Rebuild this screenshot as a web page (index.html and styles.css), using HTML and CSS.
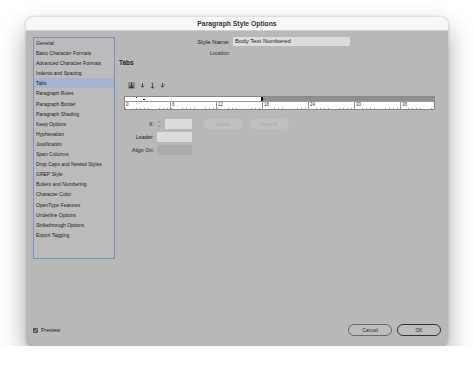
FILE: index.html
```html
<!DOCTYPE html>
<html lang="en">

<head>
    <meta charset="UTF-8" />
    <title>Paragraph Style Options</title>
    <link rel="stylesheet" href="styles.css">
</head>

<body>
    <div class="fenetre">
        <div class="titre">Paragraph Style Options</div>
        <div class="contenu">
            <div class="principal">
                <ul class="liste">
                    <li>General</li>
                    <li>Basic Character Formats</li>
                    <li>Advanced Character Formats</li>
                    <li>Indents and Spacing</li>
                    <li class="actif">Tabs</li>
                    <li>Paragraph Rules</li>
                    <li>Paragraph Border</li>
                    <li>Paragraph Shading</li>
                    <li>Keep Options</li>
                    <li>Hyphenation</li>
                    <li>Justification</li>
                    <li>Span Columns</li>
                    <li>Drop Caps and Nested Styles</li>
                    <li>GREP Style</li>
                    <li>Bullets and Numbering</li>
                    <li>Character Color</li>
                    <li>OpenType Features</li>
                    <li>Underline Options</li>
                    <li>Strikethrough Options</li>
                    <li>Export Tagging</li>
                </ul>

                <div class="panneau">
                    <div class="ligne-nom">
                        <label class="etiquette-nom">Style Name:</label>
                        <div class="champ champ-nom">Body Text Numbered</div>
                    </div>
                    <div class="ligne-lieu">
                        <label class="etiquette-nom">Location:</label>
                    </div>
                    <h3 class="section">Tabs</h3>

                    <div class="outils-tabs">
                        <span class="outil choisi">
                            <svg width="5" height="5" viewBox="0 0 5 5"><path d="M2.5 0V4M0.8 2.6L2.5 4.3L4.2 2.6M0 4.6H5" stroke="#222" stroke-width="0.8" fill="none"/></svg>
                        </span>
                        <span class="outil">
                            <svg width="5" height="5" viewBox="0 0 5 5"><path d="M2.5 0V4M0.8 2.6L2.5 4.3L4.2 2.6" stroke="#333" stroke-width="0.8" fill="none"/></svg>
                        </span>
                        <span class="outil">
                            <svg width="5" height="6" viewBox="0 0 5 6"><path d="M1.5 0.4H3.5M2.5 1.2V5M0.8 3.6L2.5 5.3L4.2 3.6" stroke="#333" stroke-width="0.8" fill="none"/></svg>
                        </span>
                        <span class="outil">
                            <svg width="5" height="5" viewBox="0 0 5 5"><path d="M2.5 0V4M0.8 2.6L2.5 4.3L4.2 2.6" stroke="#333" stroke-width="0.8" fill="none"/><circle cx="4.3" cy="1.6" r="0.5" fill="#333"/></svg>
                        </span>
                    </div>

                    <div class="regle">
                        <div class="bande">
                            <span class="retrait"></span>
                            <span class="retrait bas"></span>
                            <span class="marge"></span>
                        </div>
                        <div class="graduations">
                            <span>0</span>
                            <span>6</span>
                            <span>12</span>
                            <span>18</span>
                            <span>24</span>
                            <span>30</span>
                            <span>36</span>
                        </div>
                    </div>

                    <div class="reglages">
                        <div class="ligne-reglage">
                            <label class="etiquette">X:</label>
                            <span class="fleches">
                                <svg width="4" height="8" viewBox="0 0 4 8"><path d="M0.6 2.8L2 1.2L3.4 2.8M0.6 5.2L2 6.8L3.4 5.2" stroke="#777" stroke-width="0.6" fill="none"/></svg>
                            </span>
                            <div class="champ champ-x"></div>
                            <button class="bouton-inactif">Delete</button>
                            <button class="bouton-inactif">Clear All</button>
                        </div>
                        <div class="ligne-reglage">
                            <label class="etiquette">Leader:</label>
                            <div class="champ champ-court"></div>
                        </div>
                        <div class="ligne-reglage">
                            <label class="etiquette">Align On:</label>
                            <div class="champ champ-court inactif"></div>
                        </div>
                    </div>
                </div>
            </div>

            <div class="pied">
                <label class="apercu">
                    <span class="case">
                        <svg width="5" height="5" viewBox="0 0 5 5"><path d="M1 2.6L2.1 3.7L4 1.2" stroke="#ddd" stroke-width="0.8" fill="none"/></svg>
                    </span>
                    Preview
                </label>
                <div class="boutons">
                    <button class="bouton">Cancel</button>
                    <button class="bouton principal-btn">OK</button>
                </div>
            </div>
        </div>
    </div>
</body>

</html>
```

FILE: styles.css
```css
body {
    margin: 0;
    padding: 0;
    background-color: #ffffff;
    font-family: "Liberation Sans", Arial, sans-serif;
    color: #1e1e1e;
}

.fenetre {
    margin: 17px 0 0 26px;
    width: 422px;
    height: 329px;
    border-radius: 6px;
    overflow: hidden;
    background-color: #b8b8b8;
    box-shadow: 0 12px 26px rgba(0, 0, 0, 0.35), 0 0 3px rgba(0, 0, 0, 0.2);
    display: flex;
    flex-direction: column;
}

.titre {
    height: 13px;
    line-height: 13px;
    background-color: #f7f7f7;
    border-bottom: 1px solid #d0d0d0;
    text-align: center;
    font-size: 6.8px;
    font-weight: bold;
    color: #333;
}

.contenu {
    flex: 1;
    display: flex;
    flex-direction: column;
}

.principal {
    flex: 1;
    display: flex;
    padding: 6px 7px 0 7px;
}

/* liste des sections */
.liste {
    list-style: none;
    margin: 0;
    padding: 0;
    width: 80px;
    height: 220px;
    border: 1px solid #7f95b6;
    background-color: #bbbbbb;
}

.liste li {
    height: 10.1px;
    line-height: 10.1px;
    padding-left: 2px;
    font-size: 5px;
    color: #1c1c1c;
    white-space: nowrap;
}

.liste li.actif {
    background-color: #a3b5cc;
}

.panneau {
    flex: 1;
    margin-left: 4px;
    display: flex;
    flex-direction: column;
    font-size: 5.6px;
}

.ligne-nom {
    display: flex;
    align-items: center;
    height: 9px;
}

.etiquette-nom {
    width: 114px;
    padding-right: 3px;
    box-sizing: border-box;
    text-align: right;
    font-size: 6px;
    color: #222;
}

.ligne-lieu {
    display: flex;
    align-items: center;
    height: 7px;
    margin-top: 3px;
}

.ligne-lieu .etiquette-nom {
    font-size: 5px;
    color: #333;
}

.champ {
    height: 9px;
    background-color: #dcdcdc;
    border-radius: 1px;
    box-sizing: border-box;
}

.champ-nom {
    width: 117px;
    padding-left: 2px;
    line-height: 9px;
    font-size: 6px;
    color: #1a1a1a;
}

.section {
    margin: 3px 0 0 0;
    height: 8px;
    line-height: 8px;
    font-size: 6.4px;
    font-weight: bold;
    color: #222;
}

.outils-tabs {
    display: flex;
    align-items: center;
    margin-top: 15px;
    margin-left: 9px;
    height: 7px;
    gap: 3px;
}

.outil {
    width: 7px;
    height: 7px;
    display: flex;
    align-items: center;
    justify-content: center;
}

.outil.choisi {
    background-color: #8e8e8e;
    border-radius: 1px;
    margin-right: 1px;
}

/* regle */
.regle {
    margin: 7px 0 0 5px;
    width: 311px;
    height: 14px;
    border: 1px solid #8a8a8a;
    box-sizing: border-box;
    background-color: #ffffff;
    overflow: hidden;
}

.bande {
    position: relative;
    height: 4px;
    border-bottom: 1px solid #9a9a9a;
    background: linear-gradient(to right, #ffffff 137px, #8f8f8f 137px);
}

.retrait {
    position: absolute;
    left: 11px;
    top: 0;
    width: 1px;
    height: 1px;
    background-color: #222;
}

.retrait.bas {
    left: 18px;
    top: 2px;
    width: 2px;
}

.marge {
    position: absolute;
    left: 136px;
    top: 0;
    width: 2px;
    height: 4px;
    background-color: #111;
}

.graduations {
    display: flex;
    height: 8px;
    background-image: repeating-linear-gradient(to right, #9a9a9a 0, #9a9a9a 0.6px, transparent 0.6px, transparent 3.83px);
    background-size: 100% 2px;
    background-position: 0 100%;
    background-repeat: no-repeat;
}

.graduations span {
    flex: none;
    width: 46px;
    box-sizing: border-box;
    border-left: 1px solid #9a9a9a;
    padding-left: 1px;
    font-size: 4.5px;
    line-height: 5px;
    color: #333;
}

.graduations span:first-child {
    border-left: none;
    width: 45px;
}

/* reglages */
.reglages {
    margin-top: 9px;
    display: flex;
    flex-direction: column;
    gap: 3px;
}

.ligne-reglage {
    display: flex;
    align-items: center;
    height: 10px;
}

.etiquette {
    width: 36px;
    padding-right: 1px;
    box-sizing: border-box;
    text-align: right;
    font-size: 5.4px;
    color: #222;
}

.fleches {
    width: 7px;
    margin-left: 2px;
    display: flex;
    align-items: center;
}

.champ-x {
    width: 27px;
    height: 10px;
    margin-left: 1px;
}

.champ-court {
    width: 35px;
    height: 10px;
    margin-left: 2px;
}

.champ-court.inactif {
    background-color: #acacac;
}

.bouton-inactif {
    width: 40px;
    height: 10px;
    margin-left: 11px;
    padding: 0;
    border: none;
    border-radius: 5px;
    background-color: #c0c0c0;
    color: #a9a9a9;
    font-family: "Liberation Sans", Arial, sans-serif;
    font-size: 4.6px;
}

.bouton-inactif + .bouton-inactif {
    margin-left: 6px;
}

/* pied */
.pied {
    display: flex;
    align-items: center;
    justify-content: space-between;
    padding: 0 7px 10px 7px;
}

.apercu {
    display: flex;
    align-items: center;
    gap: 3px;
    font-size: 5.4px;
    color: #222;
}

.case {
    width: 5px;
    height: 5px;
    background-color: #555;
    border-radius: 1px;
    display: flex;
}

.boutons {
    display: flex;
    gap: 5px;
}

.bouton {
    width: 44px;
    height: 12px;
    padding: 0;
    border: 1px solid #6a6a6a;
    border-radius: 6px;
    background-color: #bdbdbd;
    color: #2a2a2a;
    font-family: "Liberation Sans", Arial, sans-serif;
    font-size: 5px;
}

.principal-btn {
    border: 1.5px solid #333;
}
```
